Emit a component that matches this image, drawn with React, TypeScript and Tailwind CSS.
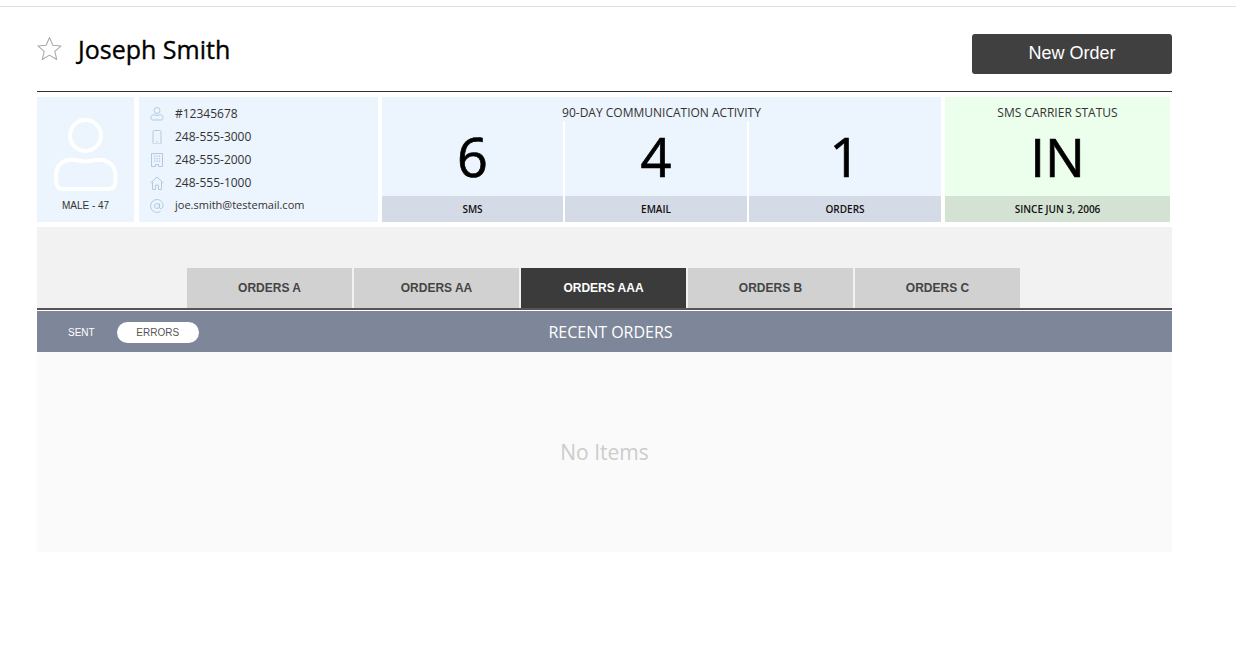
const openSans = "font-['Open_Sans',sans-serif]";

function ContactIcon({ name }: { name: string }) {
  const cls = "w-[14px] h-[14px] text-[#b4c9e0]";
  if (name === "user")
    return (
      <svg viewBox="0 0 14 14" className={cls} fill="none" stroke="currentColor" strokeWidth="1">
        <circle cx="7" cy="3.500" r="3" />
        <path d="M2.500 8c1.500-.6 3 .4 4.500.4S10 7.400 11.500 8c1 .4 1.500 1.400 1.500 2.500 0 1.500-.4 2.500-1.800 2.500H2.800C1.400 13 1 12 1 10.500 1 9.400 1.500 8.400 2.500 8z" />
      </svg>
    );
  if (name === "phone")
    return (
      <svg viewBox="0 0 14 14" className={cls} fill="none" stroke="currentColor" strokeWidth="1">
        <rect x="3" y="0.500" width="8" height="13.500" rx="1.300" />
        <circle cx="7" cy="11.800" r="0.700" fill="currentColor" stroke="none" />
      </svg>
    );
  if (name === "office")
    return (
      <svg viewBox="0 0 14 14" className={cls} fill="none" stroke="currentColor" strokeWidth="1">
        <path d="M1.500 13.500V.5h11v13H8.500v-2h-3v2z" />
        <g fill="currentColor" stroke="none">
          <rect x="4" y="2.500" width="1.300" height="1.300" />
          <rect x="6.400" y="2.500" width="1.300" height="1.300" />
          <rect x="8.800" y="2.500" width="1.300" height="1.300" />
          <rect x="4" y="5" width="1.300" height="1.300" />
          <rect x="6.400" y="5" width="1.300" height="1.300" />
          <rect x="8.800" y="5" width="1.300" height="1.300" />
          <rect x="4" y="7.500" width="1.300" height="1.300" />
          <rect x="6.400" y="7.500" width="1.300" height="1.300" />
          <rect x="8.800" y="7.500" width="1.300" height="1.300" />
        </g>
      </svg>
    );
  if (name === "home")
    return (
      <svg viewBox="0 0 14 14" className={cls} fill="none" stroke="currentColor" strokeWidth="1">
        <path d="M0.500 7L7 1l6.500 6M2.500 5.800v7.700h3V9.200h3v4.300h3V5.800" />
      </svg>
    );
  return (
    <svg viewBox="0 0 14 14" className={cls} fill="none" stroke="currentColor" strokeWidth="1">
      <circle cx="7" cy="7" r="2.500" />
      <path d="M9.500 4.500v3.700c0 .9.500 1.500 1.300 1.500s2.200-.8 2.200-2.900C13 3.300 10.300.5 7 .5a6.500 6.500 0 1 0 3.500 12" />
    </svg>
  );
}

const contacts = [
  { icon: "user", text: "#12345678" },
  { icon: "phone", text: "248-555-3000" },
  { icon: "office", text: "248-555-2000" },
  { icon: "home", text: "248-555-1000" },
  { icon: "at", text: "joe.smith@testemail.com" },
];

const stats = [
  { value: "6", label: "SMS", width: "w-[181px]" },
  { value: "4", label: "EMAIL", width: "w-[182px]" },
  { value: "1", label: "ORDERS", width: "w-[192px]" },
];

const tabs = ["ORDERS A", "ORDERS AA", "ORDERS AAA", "ORDERS B", "ORDERS C"];

export default function App() {
  return (
    <div className={`min-h-[657px] bg-white ${openSans}`}>
      <div className="h-[7px] border-b border-[#e2e2e2]" />
      <div className="w-[1135px] ml-[37px]">
        {/* title row */}
        <div className="flex items-start justify-between h-[85px] border-b border-[#333333]">
          <div className="flex items-start gap-[16px] mt-[26px]">
            <svg viewBox="0 0 24 24" className="w-[25px] h-[25px] mt-[3px] text-[#a8a8a8]" fill="none" stroke="currentColor" strokeWidth="1" strokeLinejoin="round">
              <path d="M12 1.500l3.200 7.300 7.900.7-6 5.200 1.800 7.800L12 18.400l-6.900 4.100 1.800-7.800-6-5.200 7.900-.7z" />
            </svg>
            <h1 className="text-[25px] leading-[32px] [-webkit-text-stroke:0.35px_black] text-black">Joseph Smith</h1>
          </div>
          <button className="w-[200px] h-[40px] mt-[27px] pb-[2px] bg-[#404040] rounded-[3px] text-white text-[18px] font-['Liberation_Sans',sans-serif]">
            New Order
          </button>
        </div>

        {/* summary panels */}
        <div className="flex mt-[5px] h-[125px]">
          <div className="w-[97px] bg-[#ecf4fd] flex flex-col items-center">
            <svg viewBox="0 0 64 73" className="w-[64px] h-[73px] mt-[21px] text-white" fill="none" stroke="currentColor" strokeWidth="4">
              <circle cx="31.500" cy="17.500" r="15.500" />
              <path d="M14 42c6-1.500 11 1.500 17.500 1.500S43 40.500 49 42c8 2 12.500 8 12.500 16v5c0 5-2.500 8-7.500 8H9c-5 0-7-3-7-8v-5c0-8 4-14 12-16z" />
            </svg>
            <div className="mt-[8px] text-[10px] leading-[14px] text-[#333333] font-['Liberation_Sans',sans-serif]">MALE - 47</div>
          </div>

          <div className="w-[239px] ml-[5px] bg-[#ecf4fd] pt-[5px] pl-[11px]">
            {contacts.map((c) => (
              <div key={c.icon} className="flex items-center h-[23px]">
                <ContactIcon name={c.icon} />
                <span className={`ml-[11px] text-[#333333] ${c.icon === "at" ? "text-[11px]" : "text-[12px]"}`}>{c.text}</span>
              </div>
            ))}
          </div>

          <div className="w-[559px] ml-[4px] bg-[#ecf4fd] flex flex-col">
            <div className="h-[24px] pt-[8px] text-center text-[12px] leading-[16px] text-[#333333]">90-DAY COMMUNICATION ACTIVITY</div>
            <div className="flex gap-[2px] bg-white flex-1">
              {stats.map((s) => (
                <div key={s.label} className={`${s.width} flex flex-col`}>
                  <div className="h-[75px] pb-[5px] bg-[#ecf4fd] flex items-center justify-center text-[54px] leading-none [-webkit-text-stroke:0.7px_black] text-black">{s.value}</div>
                  <div className="h-[26px] pt-[1px] bg-[#d4dbe6] flex items-center justify-center text-[10px] font-semibold text-[#111111]">{s.label}</div>
                </div>
              ))}
            </div>
          </div>

          <div className="w-[225px] ml-[4px] flex flex-col bg-[#ecfeec]">
            <div className="h-[24px] pt-[8px] text-center text-[12px] leading-[16px] text-[#333333]">SMS CARRIER STATUS</div>
            <div className="h-[75px] pb-[5px] flex items-center justify-center text-[53px] leading-none [-webkit-text-stroke:0.7px_black] text-black">IN</div>
            <div className="h-[26px] pt-[1px] bg-[#d4e2d4] flex items-center justify-center text-[10px] font-semibold text-[#111111]">SINCE JUN 3, 2006</div>
          </div>
        </div>

        {/* tabs */}
        <div className="mt-[5px] h-[83px] bg-[#f2f2f2] border-b-2 border-[#555555] flex items-end gap-[2px] pl-[150px]">
          {tabs.map((t) => (
            <div
              key={t}
              className={`w-[165px] h-[40px] flex items-center justify-center text-[12px] font-bold font-['Liberation_Sans',sans-serif] ${
                t === "ORDERS AAA" ? "bg-[#3b3b3b] text-white" : "bg-[#d1d1d1] text-[#444444]"
              }`}
            >
              {t}
            </div>
          ))}
        </div>

        {/* recent orders */}
        <div className="mt-px h-[41px] bg-[#7e8699] flex items-center">
          <div className="w-[162px] flex items-center pl-[31px] pt-[2px] font-['Liberation_Sans',sans-serif] text-[10px]">
            <span className="text-white">SENT</span>
            <span className="ml-[22px] w-[82px] h-[21px] rounded-full bg-white text-[#555555] flex items-center justify-center">ERRORS</span>
          </div>
          <div className="w-[823px] text-center text-[16px] text-white">RECENT ORDERS</div>
        </div>
        <div className="h-[200px] pt-[2px] bg-[#fafafa] flex items-center justify-center text-[21px] text-[#cccccc]">No Items</div>
      </div>
    </div>
  );
}
